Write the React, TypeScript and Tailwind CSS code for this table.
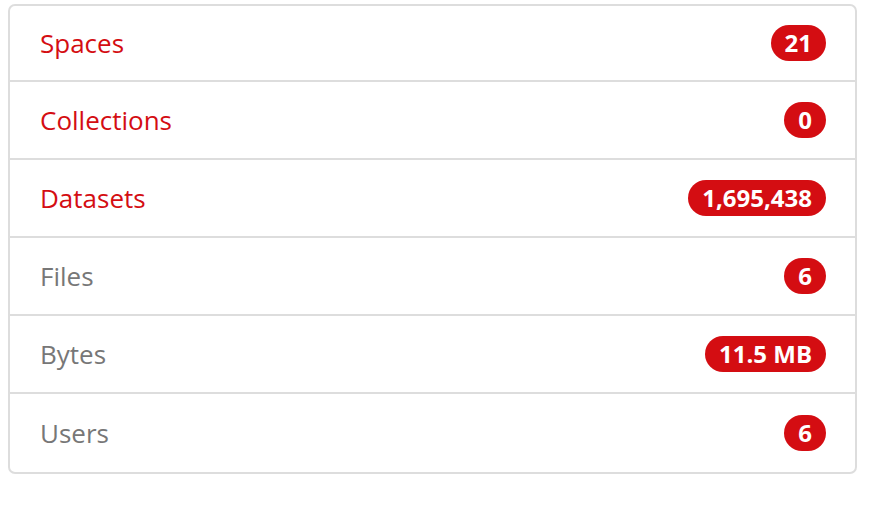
const rows = [
  { label: 'Spaces', value: '21', link: true },
  { label: 'Collections', value: '0', link: true },
  { label: 'Datasets', value: '1,695,438', link: true },
  { label: 'Files', value: '6', link: false },
  { label: 'Bytes', value: '11.5 MB', link: false },
  { label: 'Users', value: '6', link: false },
];

export default function App() {
  return (
    <div className="min-h-screen bg-white pt-[4px] pl-[8px] pr-[21px]" style={{ fontFamily: '"Open Sans", sans-serif' }}>
      <ul className="border-2 border-[#dddddd] rounded-[7px] divide-y-2 divide-[#dddddd]">
        {rows.map((r) => (
          <li key={r.label} className="flex items-center justify-between h-[78px] first:h-[76px] pl-[30px] pr-[29px]">
            <span className={`text-[26px] ${r.link ? 'text-[#d40d12]' : 'text-[#777777]'}`}>{r.label}</span>
            <span className="bg-[#d40d12] text-white font-bold text-[24px] leading-none px-[14px] py-[6px] rounded-full">
              {r.value}
            </span>
          </li>
        ))}
      </ul>
    </div>
  );
}
